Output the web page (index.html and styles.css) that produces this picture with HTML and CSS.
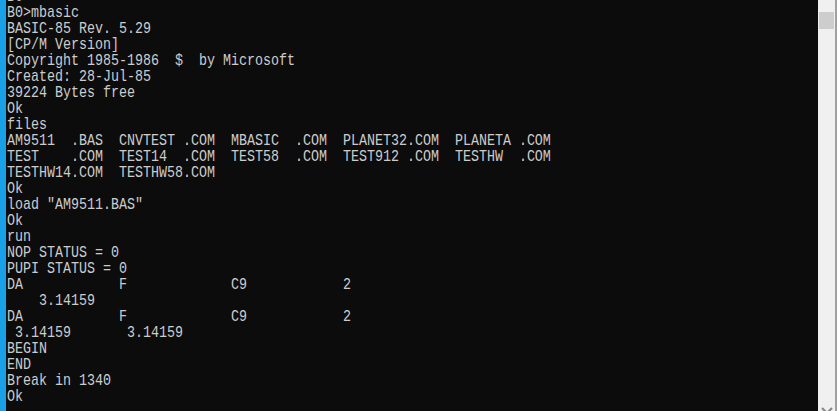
FILE: index.html
```html
<!DOCTYPE html>
<html>
<head>
<meta charset="utf-8">
<link rel="stylesheet" href="styles.css">
</head>
<body>
<div class="window">
  <div class="accent"></div>
  <div class="console">
<pre class="text">B0&gt;
B0&gt;mbasic
BASIC-85 Rev. 5.29
[CP/M Version]
Copyright 1985-1986  $  by Microsoft
Created: 28-Jul-85
39224 Bytes free
Ok
files
AM9511  .BAS  CNVTEST .COM  MBASIC  .COM  PLANET32.COM  PLANETA .COM
TEST    .COM  TEST14  .COM  TEST58  .COM  TEST912 .COM  TESTHW  .COM
TESTHW14.COM  TESTHW58.COM
Ok
load ″AM9511.BAS″
Ok
run
NOP STATUS = 0
PUPI STATUS = 0
DA            F             C9            2
    3.14159
DA            F             C9            2
 3.14159       3.14159
BEGIN
END
Break in 1340
Ok</pre>
  </div>
  <div class="scrollbar">
    <div class="thumb"></div>
    <svg class="arrow" width="12" height="8" viewBox="0 0 12 8"><path d="M1 1 L6 6 L11 1" fill="none" stroke="#858585" stroke-width="2"/></svg>
  </div>
  <div class="edge"></div>
</div>
</body>
</html>
```
FILE: styles.css
```css
html, body {
  margin: 0;
  padding: 0;
  background: #0c0c0c;
}
.window {
  display: flex;
  width: 837px;
  height: 411px;
  overflow: hidden;
  background: #0c0c0c;
}
.accent {
  width: 6px;
  flex: none;
  background: #19a0e6;
}
.console {
  flex: 1;
  padding-left: 1px;
  overflow: hidden;
}
.text {
  margin: -11px 0 0 0;
  font-family: "Liberation Mono", monospace;
  font-size: 17px;
  line-height: 16px;
  color: #cccccc;
  white-space: pre;
  transform: scaleX(0.784);
  transform-origin: 0 0;
}
.scrollbar {
  width: 17px;
  flex: none;
  background: #f0f0f0;
  display: flex;
  flex-direction: column;
  align-items: center;
}
.thumb {
  width: 15px;
  height: 17px;
  margin-top: 12px;
  background: #cdcdcd;
}
.arrow {
  margin-top: auto;
  margin-bottom: -4px;
}
.edge {
  width: 2px;
  flex: none;
  background: #a0a0a0;
}
```
